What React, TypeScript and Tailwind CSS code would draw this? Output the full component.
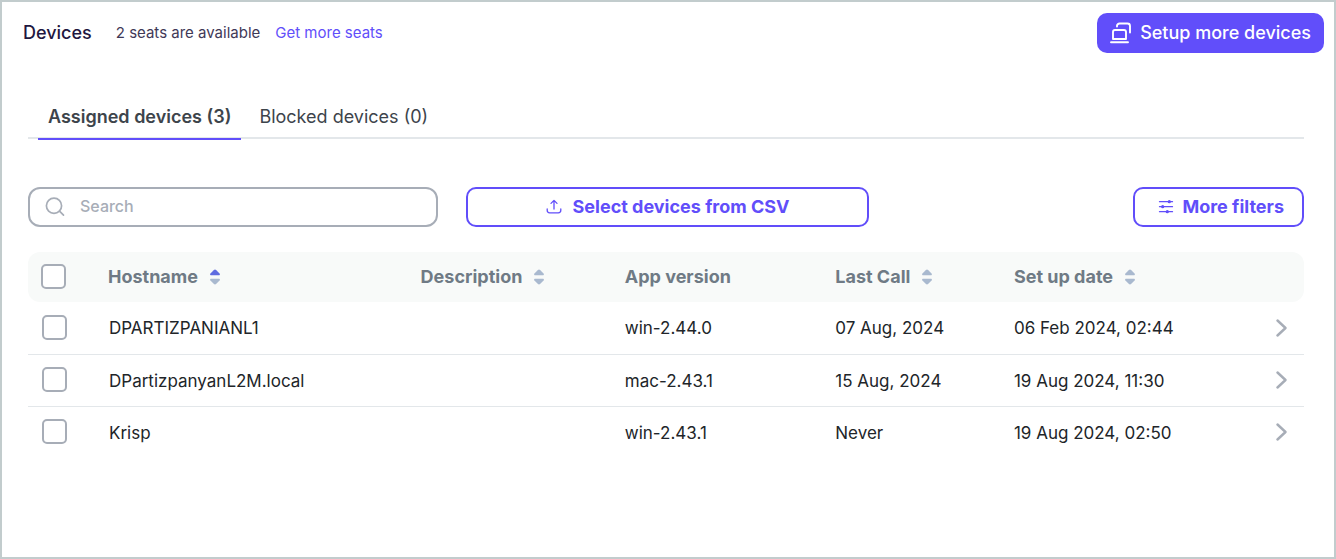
import { useState } from "react";

type Device = { host: string; description: string; version: string; lastCall: string; setup: string };

const devices: Device[] = [
  { host: "DPARTIZPANIANL1", description: "", version: "win-2.44.0", lastCall: "07 Aug, 2024", setup: "06 Feb 2024, 02:44" },
  { host: "DPartizpanyanL2M.local", description: "", version: "mac-2.43.1", lastCall: "15 Aug, 2024", setup: "19 Aug 2024, 11:30" },
  { host: "Krisp", description: "", version: "win-2.43.1", lastCall: "Never", setup: "19 Aug 2024, 02:50" },
];

const columns = [
  { label: "Hostname", sortable: true, active: true, width: "w-[24.5%]" },
  { label: "Description", sortable: true, active: false, width: "w-[16%]" },
  { label: "App version", sortable: false, active: false, width: "w-[16.5%]" },
  { label: "Last Call", sortable: true, active: false, width: "w-[14%]" },
  { label: "Set up date", sortable: true, active: false, width: "" },
];

function DevicesIcon() {
  return (
    <svg width="22" height="22" viewBox="0 0 22 22" fill="none" stroke="currentColor" strokeWidth="1.900" strokeLinecap="round" strokeLinejoin="round" aria-hidden="true">
      <path d="M7 4.500V4a2.500 2.500 0 0 1 2.500-2.500h8a2.500 2.500 0 0 1 2.500 2.500v6.500" />
      <path d="M3 17V10a2 2 0 0 1 2-2h9a2 2 0 0 1 2 2v7z" />
      <path d="M1 20.200h17" />
    </svg>
  );
}

function SearchIcon() {
  return (
    <svg width="20" height="20" viewBox="0 0 20 20" fill="none" stroke="currentColor" strokeWidth="1.700" strokeLinecap="round" aria-hidden="true">
      <circle cx="9" cy="8.700" r="7.600" />
      <path d="M14.500 14.200l4 4" />
    </svg>
  );
}

function UploadIcon() {
  return (
    <svg width="16" height="16" viewBox="0 0 16 16" fill="none" stroke="currentColor" strokeWidth="1.300" strokeLinecap="round" strokeLinejoin="round" aria-hidden="true">
      <path d="M8 10V1.500M5 4.400L8 1.400 11 4.400" />
      <path d="M1.200 10v1.300A2.500 2.500 0 0 0 3.700 13.800h8.600a2.500 2.500 0 0 0 2.500-2.500v-1.300" />
    </svg>
  );
}

function FiltersIcon() {
  return (
    <svg width="16" height="16" viewBox="0 0 16 16" fill="currentColor" stroke="currentColor" strokeLinecap="round" aria-hidden="true">
      <path d="M1.500 2.700h13M1.500 7.700h13M1.500 12.700h13" strokeWidth="1.300" />
      <g stroke="none">
        <circle cx="11.300" cy="2.700" r="1.600" />
        <circle cx="4.700" cy="7.700" r="1.600" />
        <circle cx="9.300" cy="12.700" r="1.600" />
      </g>
    </svg>
  );
}

function SortIcon({ active }: { active: boolean }) {
  return (
    <svg width="10" height="16" viewBox="0 0 10 16" aria-hidden="true">
      <path d="M.8 6.200C0 6.200-.1 5.200.4 4.600L3.700 1.200Q5 0 6.300 1.200L9.600 4.600C10.100 5.200 10 6.200 9.200 6.200z" fill={active ? "#5f6ce0" : "#a9b9cf"} />
      <path d="M.8 9.800C0 9.800-.1 10.800.4 11.400L3.700 14.800Q5 16 6.300 14.800L9.600 11.400C10.100 10.800 10 9.800 9.200 9.800z" fill="#a9b9cf" />
    </svg>
  );
}

function ChevronIcon() {
  return (
    <svg width="12" height="18" viewBox="0 0 12 18" fill="none" stroke="#a7adb7" strokeWidth="2.400" strokeLinecap="round" strokeLinejoin="round" aria-hidden="true">
      <path d="M2.500 1.500L10.500 9l-8 7.500" />
    </svg>
  );
}

function CheckBox({ label, checked, onChange }: { label: string; checked: boolean; onChange: () => void }) {
  return (
    <input
      type="checkbox"
      aria-label={label}
      checked={checked}
      onChange={onChange}
      className="block size-[25px] appearance-none rounded-[5px] border-2 border-[#a7adb7] bg-white checked:bg-[#614efa]"
    />
  );
}

export default function App() {
  const [tab, setTab] = useState(0);
  const [selected, setSelected] = useState<string[]>([]);
  const all = selected.length === devices.length;
  const toggle = (host: string) =>
    setSelected((s) => (s.includes(host) ? s.filter((h) => h !== host) : [...s, host]));

  return (
    <main className="min-h-screen border-2 border-[#c2cccd] bg-white font-['Inter','Liberation_Sans',sans-serif] text-[#212529]">
      <header className="flex items-center justify-between pt-[11px] pr-[10px] pl-[21px]">
        <div className="flex items-center text-[15px] text-[#3f3957]">
          <h1 className="mr-6 text-lg font-medium text-[#1f1740]">Devices</h1>
          <p className="mr-[15px]">2 seats are available</p>
          <a href="#seats" className="text-[#614efa]">Get more seats</a>
        </div>
        <button type="button" className="flex h-10 items-center gap-2 rounded-[10px] bg-[#614efa] px-[13px] text-lg font-medium text-white">
          <DevicesIcon />
          Setup more devices
        </button>
      </header>

      <div className="pt-[42px] pr-[30px] pl-[26px]">
        <div role="tablist" className="flex gap-2 border-b-2 border-[#e3e7ea] pl-[10px] text-lg text-[#3d444b]">
          {["Assigned devices (3)", "Blocked devices (0)"].map((label, i) => (
            <button
              key={label}
              type="button"
              role="tab"
              aria-selected={tab === i}
              onClick={() => setTab(i)}
              className={
                tab === i
                  ? "-mb-[3px] h-[45px] border-b-2 border-[#614efa] px-[10px] font-semibold"
                  : "-mb-[3px] h-[45px] border-b-2 border-transparent px-[10px]"
              }
            >
              {label}
            </button>
          ))}
        </div>

        <div className="mt-12 flex items-center gap-7">
          <label className="flex h-10 max-w-[410px] flex-1 items-center gap-[15px] rounded-xl border-2 border-[#a7adb7] px-[15px] text-[#a7adb7]">
            <SearchIcon />
            <input type="search" aria-label="Search" placeholder="Search" className="min-w-0 flex-1 bg-transparent pb-0.5 text-base font-medium text-[#212529] outline-none placeholder:text-[#a7adb7]" />
          </label>
          <button type="button" className="flex h-10 max-w-[403px] flex-1 items-center justify-center gap-[11px] rounded-[10px] border-2 border-[#614efa] text-lg font-bold text-[#614efa]">
            <UploadIcon />
            Select devices from CSV
          </button>
          <button type="button" className="ml-auto flex h-10 items-center gap-2 rounded-[10px] border-2 border-[#614efa] pr-[18px] pl-[23px] text-lg font-bold text-[#614efa]">
            <FiltersIcon />
            More filters
          </button>
        </div>

        <table className="mt-[25px] w-full table-fixed border-separate border-spacing-0 text-left text-[17px]">
          <thead>
            <tr className="h-[50px] text-lg text-[#6f7a85]">
              <th className="w-20 rounded-l-xl bg-[#f8faf9] pb-0.5 pl-[13px]">
                <CheckBox label="Select all devices" checked={all} onChange={() => setSelected(all ? [] : devices.map((d) => d.host))} />
              </th>
              {columns.map((c) => (
                <th key={c.label} className={`bg-[#f8faf9] font-bold whitespace-nowrap ${c.width}`}>
                  {c.sortable ? (
                    <button type="button" className="flex items-center gap-3">
                      {c.label}
                      <SortIcon active={c.active} />
                    </button>
                  ) : (
                    c.label
                  )}
                </th>
              ))}
              <th className="w-[39px] rounded-r-xl bg-[#f8faf9]" />
            </tr>
          </thead>
          <tbody>
            {devices.map((d, i) => {
              const line = i > 0 ? "border-t border-[#e3e7ea]" : "";
              return (
                <tr key={d.host} className="h-[52px] leading-6 whitespace-nowrap">
                  <td className={`pb-0.5 pl-[14px] ${line}`}>
                    <CheckBox label={`Select ${d.host}`} checked={selected.includes(d.host)} onChange={() => toggle(d.host)} />
                  </td>
                  <td className={`pl-px ${line}`}>{d.host}</td>
                  <td className={line}>{d.description}</td>
                  <td className={line}>{d.version}</td>
                  <td className={line}>{d.lastCall}</td>
                  <td className={line}>{d.setup}</td>
                  <td className={`pb-px pl-[10px] ${line}`}>
                    <button type="button" aria-label={`Open ${d.host}`} className="block">
                      <ChevronIcon />
                    </button>
                  </td>
                </tr>
              );
            })}
          </tbody>
        </table>
      </div>
    </main>
  );
}
